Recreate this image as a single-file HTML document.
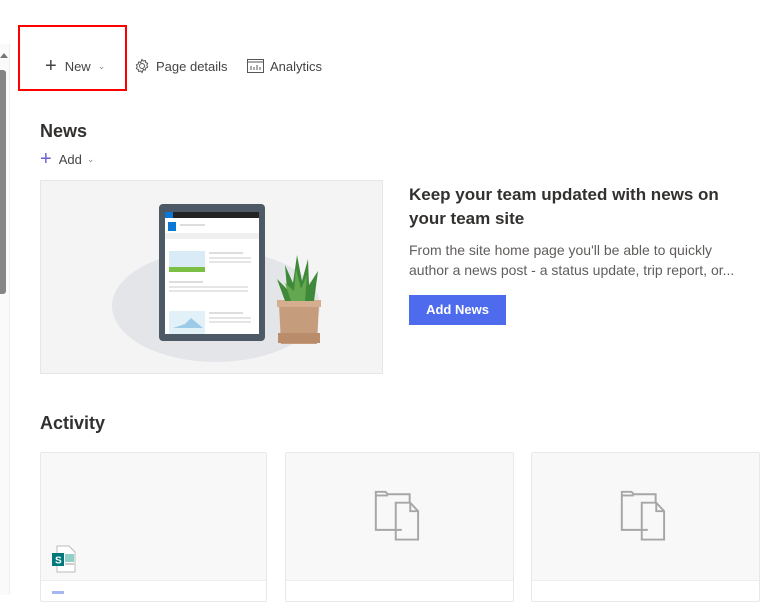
<!DOCTYPE html>
<html><head><meta charset="utf-8"><style>
*{margin:0;padding:0;box-sizing:border-box}
body{width:768px;height:595px;overflow:hidden;background:#fff;font-family:"Liberation Sans",sans-serif;color:#323130;position:relative}
.a{position:absolute}
</style></head><body>
<div class="a" style="left:0;top:44px;width:10px;height:551px;background:#fafafa;border-right:1px solid #eee"></div>
<div class="a" style="left:0;top:70px;width:6px;height:224px;background:#858585;border-radius:0 3px 3px 0"></div>
<div class="a" style="left:0;top:53px;width:0;height:0;border-left:4px solid transparent;border-right:4px solid transparent;border-bottom:5px solid #777"></div>
<div class="a" style="left:18px;top:25px;width:109px;height:66px;border:2px solid #f00"></div>
<div class="a" style="left:45px;top:58px;font-size:13px;color:#444;display:flex;align-items:center">
<span style="font-size:20px;font-weight:300;line-height:16px;margin-right:8px">+</span>New<span style="font-size:9px;margin-left:7px;color:#888">&#8964;</span></div>
<svg class="a" style="left:134px;top:58px" width="16" height="16" viewBox="0 0 16 16"><circle cx="8" cy="8" r="2.5" fill="none" stroke="#555"/><path d="M8 1.5l1.3 1.6 2-.6.4 2 1.9.9-.8 1.9.8 1.9-1.9.9-.4 2-2-.6L8 14.5l-1.3-1.6-2 .6-.4-2-1.9-.9.8-1.9-.8-1.9 1.9-.9.4-2 2 .6z" fill="none" stroke="#555"/></svg>
<div class="a" style="left:156px;top:59px;font-size:13px;color:#444">Page details</div>
<svg class="a" style="left:247px;top:59px" width="17" height="14" viewBox="0 0 17 14"><rect x=".5" y=".5" width="16" height="13" fill="none" stroke="#555"/><line x1=".5" y1="3" x2="16.5" y2="3" stroke="#555"/><path d="M4 11V7M7 11V8M10 11V6M13 11V8" stroke="#555"/></svg>
<div class="a" style="left:270px;top:59px;font-size:13px;color:#444">Analytics</div>
<div class="a" style="left:40px;top:121px;font-size:18px;font-weight:bold;color:#323130">News</div>
<div class="a" style="left:40px;top:151px;font-size:13px;color:#444;display:flex;align-items:center"><span style="color:#6b5fd8;font-size:20px;font-weight:300;line-height:16px;margin-right:7px">+</span>Add<span style="font-size:9px;margin-left:5px;color:#888">&#8964;</span></div>
<div class="a" style="left:40px;top:180px;width:343px;height:194px;background:#f4f4f4;border:1px solid #e6e6e6;overflow:hidden">
<svg width="343" height="194" viewBox="0 0 343 194">
<ellipse cx="175" cy="125" rx="104" ry="56" fill="#e4e5e8"/>
<rect x="118" y="23" width="106" height="137" rx="4" fill="#4d5964"/>
<rect x="124" y="31" width="94" height="122" fill="#fff"/>
<rect x="124" y="31" width="94" height="6" fill="#222"/>
<rect x="124" y="31" width="8" height="6" fill="#0a78d4"/>
<rect x="127" y="41" width="8" height="9" fill="#0a78d4"/>
<rect x="139" y="43" width="25" height="2" fill="#ddd"/>
<rect x="124" y="52" width="94" height="6" fill="#f0f0f0"/>
<rect x="128" y="70" width="36" height="21" fill="#d8ebf7"/>
<rect x="128" y="86" width="36" height="5" fill="#7cbf45"/>
<rect x="168" y="71" width="34" height="2" fill="#ddd"/><rect x="168" y="76" width="42" height="2" fill="#e5e5e5"/><rect x="168" y="80" width="42" height="2" fill="#e5e5e5"/>
<rect x="128" y="100" width="34" height="2" fill="#ddd"/><rect x="128" y="105" width="79" height="2" fill="#e5e5e5"/><rect x="128" y="109" width="79" height="2" fill="#e5e5e5"/>
<rect x="128" y="130" width="36" height="23" fill="#e2f0f8"/>
<path d="M132 147l12-4 6-6 12 10z" fill="#9ccbe8"/>
<rect x="168" y="131" width="34" height="2" fill="#ddd"/><rect x="168" y="136" width="42" height="2" fill="#e5e5e5"/><rect x="168" y="140" width="42" height="2" fill="#e5e5e5"/>
<path d="M238 123h40l-2 40h-36z" fill="#c59c7c"/>
<rect x="236" y="119" width="44" height="7" fill="#d4ae8e"/>
<rect x="237" y="152" width="42" height="10" fill="#b98c6c"/>
<path d="M244 120l-8-22 10 10-2-24 8 18 4-28 5 26 6-22 1 26 9-14-4 30z" fill="#3f8a3a"/>
<path d="M250 120l-6-18 9 8 2-22 5 20 6-14-2 26z" fill="#63a84e"/>
</svg></div>
<div class="a" style="left:409px;top:183px;width:340px;font-size:17px;font-weight:bold;line-height:24px;color:#323130">Keep your team updated with news on your team site</div>
<div class="a" style="left:409px;top:240px;width:332px;font-size:14px;line-height:20px;color:#605e5c">From the site home page you'll be able to quickly author a news post - a status update, trip report, or...</div>
<div class="a" style="left:409px;top:295px;width:97px;height:30px;background:#4f6bed;color:#fff;font-size:13px;font-weight:bold;text-align:center;line-height:30px">Add News</div>
<div class="a" style="left:40px;top:413px;font-size:18px;font-weight:bold">Activity</div>
<div class="a" style="left:40px;top:452px;width:227px;height:150px;background:#fff;border:1px solid #e8e8e8;border-radius:2px"><div style="height:128px;background:#f8f8f8;border-bottom:1px solid #eee"></div></div>
<div class="a" style="left:285px;top:452px;width:229px;height:150px;background:#fff;border:1px solid #e8e8e8;border-radius:2px"><div style="height:128px;background:#f8f8f8;border-bottom:1px solid #eee"></div></div>
<div class="a" style="left:531px;top:452px;width:229px;height:150px;background:#fff;border:1px solid #e8e8e8;border-radius:2px"><div style="height:128px;background:#f8f8f8;border-bottom:1px solid #eee"></div></div>
<svg class="a" style="left:51px;top:545px" width="28" height="28" viewBox="0 0 28 28"><path d="M6 1h12l6 6v20H6z" fill="#fff" stroke="#bbb"/><rect x="14" y="9" width="9" height="8" fill="#8fd1c9"/><rect x="14" y="18" width="9" height="2" fill="#ccc"/><rect x="1" y="8" width="12" height="13" fill="#03787c"/><text x="4" y="18.5" font-size="10" font-weight="bold" fill="#fff" font-family="Liberation Sans">S</text></svg>
<div class="a" style="left:52px;top:591px;width:12px;height:3px;background:#a9b6f5"></div>
<svg class="a" style="left:374px;top:490px" width="58" height="52" viewBox="0 0 48 43"><path d="M23 33H1.5V1.5h8l2 2h18v7" fill="none" stroke="#a6a6a6" stroke-width="1.6"/><path d="M1.5 4.5h10" stroke="#a6a6a6" stroke-width="1.6"/><path d="M18 10.5h12l6.5 7v23.5H18z" fill="none" stroke="#a6a6a6" stroke-width="1.6"/><path d="M30 10.5v7h6.5" fill="none" stroke="#a6a6a6" stroke-width="1.6"/></svg>
<svg class="a" style="left:620px;top:490px" width="58" height="52" viewBox="0 0 48 43"><path d="M23 33H1.5V1.5h8l2 2h18v7" fill="none" stroke="#a6a6a6" stroke-width="1.6"/><path d="M1.5 4.5h10" stroke="#a6a6a6" stroke-width="1.6"/><path d="M18 10.5h12l6.5 7v23.5H18z" fill="none" stroke="#a6a6a6" stroke-width="1.6"/><path d="M30 10.5v7h6.5" fill="none" stroke="#a6a6a6" stroke-width="1.6"/></svg>
</body></html>
